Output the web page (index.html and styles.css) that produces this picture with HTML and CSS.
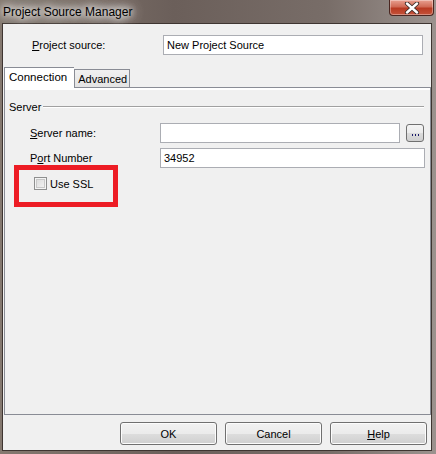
FILE: index.html
```html
<!DOCTYPE html>
<html lang="en">
<head>
    <meta charset="UTF-8">
    <title>Project Source Manager</title>
    <link rel="stylesheet" href="styles.css">
</head>
<body>
    <div class="window">
        <!-- Title bar -->
        <div class="titlebar">
            <span class="title">Project Source Manager</span>
            <div class="close-btn">
                <svg width="16" height="12" viewBox="0 0 16 12">
                    <path d="M3 1.5 L13 10.5 M13 1.5 L3 10.5" stroke="#3a2a26" stroke-width="4.2" stroke-linecap="round"/>
                    <path d="M3 1.5 L13 10.5 M13 1.5 L3 10.5" stroke="#ffffff" stroke-width="2.4" stroke-linecap="round"/>
                </svg>
            </div>
        </div>

        <div class="client">
            <div class="source-row">
                <label class="source-label"><u>P</u>roject source:</label>
                <div class="textbox source-input">New Project Source</div>
            </div>

            <!-- Tabs -->
            <div class="tabs">
                <div class="tab active">Connection</div>
                <div class="tab">Advanced</div>
            </div>

            <div class="panel">
                <div class="group-head">
                    <span>Server</span>
                    <span class="rule"></span>
                </div>

                <div class="form-grid">
                    <label><u>S</u>erver name:</label>
                    <div class="input-with-btn">
                        <div class="textbox"></div>
                        <div class="ellipsis-btn"><span></span><span></span><span></span></div>
                    </div>

                    <label>P<u>o</u>rt Number</label>
                    <div class="textbox">34952</div>
                </div>

                <div class="highlight">
                    <label class="check"><span class="check-box"></span>Use SSL</label>
                </div>
            </div>

            <div class="buttons">
                <button class="btn">OK</button>
                <button class="btn">Cancel</button>
                <button class="btn"><u>H</u>elp</button>
            </div>
        </div>
    </div>
</body>
</html>
```

FILE: styles.css
```css
/* Base */
* {
    margin: 0;
    padding: 0;
    box-sizing: border-box;
}

body {
    width: 436px;
    height: 454px;
    overflow: hidden;
    font-family: "Liberation Sans", Arial, sans-serif;
    font-size: 11px;
    color: #000;
}

u {
    text-decoration: underline;
    text-underline-offset: 1px;
}

/* Window frame */
.window {
    width: 436px;
    height: 454px;
    display: flex;
    flex-direction: column;
    padding: 0 4px 3px 2px;
    background: linear-gradient(90deg, #84786f 0%, #6b5f5a 40%, #786d68 75%, #9b928e 100%);
}

.titlebar {
    height: 23px;
    display: flex;
    align-items: flex-start;
    justify-content: space-between;
    position: relative;
}

.title {
    font-size: 12px;
    padding: 5px 0 0 1px;
    color: #000;
    text-shadow: 0 0 6px #fff, 0 0 10px #fff, 0 0 14px rgba(255, 255, 255, 0.9), 0 0 18px rgba(255, 255, 255, 0.8);
}

.close-btn {
    width: 45px;
    height: 16px;
    margin-right: -2px;
    border: 1px solid #4a2620;
    border-top: none;
    border-radius: 0 0 4px 4px;
    background: linear-gradient(#e8a090 0%, #d06a55 45%, #b83a22 55%, #c4533a 100%);
    box-shadow: inset 0 0 0 1px rgba(255, 255, 255, 0.35);
    display: flex;
    align-items: center;
    justify-content: center;
}

.client {
    flex: 1;
    border: 1px solid #3e3531;
    background: #f0f0f0;
    display: flex;
    flex-direction: column;
}

/* Project source row */
.source-row {
    display: flex;
    align-items: center;
    padding-top: 11px;
}

.source-label {
    width: 160px;
    padding-left: 29px;
}

.textbox {
    height: 20px;
    background: #fff;
    border: 1px solid #abadb3;
    padding: 0 3px;
    line-height: 18px;
    white-space: nowrap;
}

.source-input {
    width: 260px;
}

/* Tabs */
.tabs {
    display: flex;
    align-items: flex-end;
    margin: 12px 0 0 1px;
    height: 20px;
    position: relative;
    z-index: 1;
}

.tab {
    height: 18px;
    padding: 0 2px 0 3px;
    border: 1px solid #898c95;
    border-bottom: none;
    background: linear-gradient(#f0f0f0, #e3e3e3);
    line-height: 18px;
    font-size: 11px;
}

.tab.active {
    height: 21px;
    margin-bottom: -1px;
    padding: 0 7px 0 4px;
    background: #fff;
    border-right: none;
    line-height: 19px;
    font-size: 11.5px;
}

.tab.active + .tab {
    border-left: 1px solid #898c95;
}

/* Tab panel */
.panel {
    height: 328px;
    margin-left: 1px;
    border: 1px solid #898c95;
    background: #f0f0f0;
    box-shadow: inset 0 2px 0 #fff;
    padding: 12px 5px 0 4px;
}

.group-head {
    display: flex;
    align-items: center;
    height: 14px;
}

.rule {
    flex: 1;
    height: 2px;
    margin: 0 1px 0 2px;
    border-top: 1px solid #a0a0a0;
    border-bottom: 1px solid #fff;
}

.form-grid {
    display: grid;
    grid-template-columns: 130px 1fr;
    align-items: center;
    row-gap: 5px;
    margin-top: 9px;
    padding-left: 21px;
}

.input-with-btn {
    display: flex;
    align-items: center;
    gap: 6px;
}

.input-with-btn .textbox {
    width: 240px;
}

.ellipsis-btn {
    width: 18px;
    height: 18px;
    border: 1px solid #707070;
    border-radius: 3px;
    background: linear-gradient(#f4f4f4 0%, #ebebeb 50%, #dcdcdc 51%, #d0d0d0 100%);
    display: flex;
    align-items: flex-end;
    justify-content: center;
    gap: 2px;
    padding-bottom: 5px;
}

.ellipsis-btn span {
    width: 1px;
    height: 2px;
    background: #1a1a6a;
}

/* Annotation box */
.highlight {
    width: 104px;
    height: 42px;
    margin: -3px 0 0 5px;
    border: 5px solid #ed1c24;
    padding: 7px 0 0 15px;
}

.check {
    display: flex;
    align-items: center;
    gap: 3px;
}

.check-box {
    width: 13px;
    height: 13px;
    border: 1px solid #8e8f8f;
    background: linear-gradient(135deg, #d8d8d8, #f6f6f6);
    box-shadow: inset 0 0 0 1px #f4f4f4, inset 0 0 0 2px #c8c8c8;
}

/* Dialog buttons */
.buttons {
    display: flex;
    justify-content: flex-end;
    gap: 8px;
    margin-top: 7px;
    padding-right: 4px;
}

.btn {
    width: 97px;
    height: 23px;
    border: 1px solid #707070;
    border-radius: 3px;
    background: linear-gradient(#f2f2f2 0%, #ebebeb 50%, #dddddd 51%, #cfcfcf 100%);
    box-shadow: inset 0 0 0 1px #fcfcfc;
    font-family: "Liberation Sans", Arial, sans-serif;
    font-size: 11px;
    color: #000;
}
```
